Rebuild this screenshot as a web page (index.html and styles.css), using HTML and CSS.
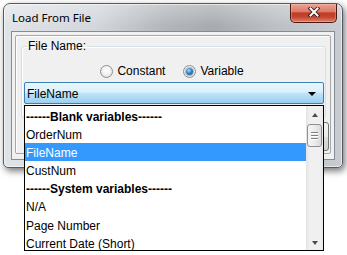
FILE: index.html
```html
<!DOCTYPE html>
<html>
<head>
<meta charset="utf-8">
<link rel="stylesheet" href="styles.css">
</head>
<body>
<div class="window">
  <div class="titlebar">
    <div class="title">Load From File</div>
    <div class="close">
      <svg width="12" height="10" viewBox="0 0 12 10">
        <path d="M2.5 1.5 L9.5 8.5 M9.5 1.5 L2.5 8.5" stroke="#3a1712" stroke-width="3.8" stroke-linecap="square" fill="none"/>
        <path d="M2.5 1.5 L9.5 8.5 M9.5 1.5 L2.5 8.5" stroke="#ffffff" stroke-width="2" stroke-linecap="square" fill="none"/>
      </svg>
    </div>
  </div>
  <div class="client">
    <div class="panel">
      <fieldset class="group">
        <legend class="legend">File Name:</legend>
        <div class="radios">
          <label class="radio"><span class="rb"></span><span>Constant</span></label>
          <label class="radio"><span class="rb"><span class="dot"></span></span><span>Variable</span></label>
        </div>
        <div class="combo">
          <span class="combo-text">FileName</span>
          <span class="arrow"></span>
        </div>
      </fieldset>
      <div class="buttons">
        <div class="btn"></div>
      </div>
    </div>
  </div>
</div>

<div class="list">
  <div class="rows">
    <div class="row hdr">------Blank variables------</div>
    <div class="row">OrderNum</div>
    <div class="row sel">FileName</div>
    <div class="row">CustNum</div>
    <div class="row hdr">------System variables------</div>
    <div class="row">N/A</div>
    <div class="row">Page Number</div>
    <div class="row">Current Date (Short)</div>
  </div>
  <div class="sb">
    <div class="sb-btn"><span class="up"></span></div>
    <div class="thumb"><span class="grip"></span><span class="grip"></span><span class="grip"></span></div>
    <div class="sb-track"></div>
    <div class="sb-btn"><span class="down"></span></div>
  </div>
</div>
</body>
</html>
```
FILE: styles.css
```css
* { box-sizing: border-box; }

body {
  margin: 0;
  width: 347px;
  height: 255px;
  overflow: hidden;
  position: relative;
  background: #ffffff;
  font-family: "Liberation Sans", Arial, sans-serif;
  font-size: 12px;
  color: #000;
}

.window {
  margin: 3px 0 0 3px;
  width: 340px;
  height: 165px;
  border: 1px solid #555b62;
  border-radius: 7px 7px 5px 5px;
  background:
    linear-gradient(180deg, rgba(255,255,255,0.3) 0px, rgba(255,255,255,0) 22px),
    linear-gradient(90deg, #e0e4e8 0%, #d2d6db 28%, #b2b6ba 48%, #a7abaf 62%, #bcc0c4 80%, #c8ccd0 100%);
  box-shadow: inset 0 0 0 1px rgba(255,255,255,0.55), 2px 3px 7px rgba(0, 0, 0, 0.55);
  display: flex;
  flex-direction: column;
  padding: 0 7px 7px;
}

.titlebar {
  height: 27px;
  display: flex;
  align-items: flex-start;
  justify-content: space-between;
}

.title {
  padding: 5px 0 0 1px;
  font-family: "Noto Sans", "Liberation Sans", sans-serif;
  font-size: 11.5px;
  line-height: 17px;
  color: #000;
}

.close {
  width: 47px;
  height: 19px;
  margin-right: -2px;
  border: 1px solid #4a1a12;
  border-top: none;
  border-radius: 0 0 5px 5px;
  background: linear-gradient(180deg, #e9a393 0%, #db7b69 42%, #c13c26 50%, #c4442e 72%, #e0866c 100%);
  box-shadow: inset 0 0 0 1px rgba(255,200,190,0.35);
  display: flex;
  align-items: center;
  justify-content: center;
  padding-bottom: 2px;
}

.client {
  flex: 1;
  border: 1px solid #868c93;
  background: #f0f0f0;
  padding: 3px 3px 5px;
}

.panel {
  height: 100%;
  border: 1px solid #a7a7a7;
  border-radius: 2px;
  box-shadow: inset 1px 1px 0 #ffffff;
  padding: 3px 0 0 5px;
  display: flex;
  flex-direction: column;
}

.group {
  margin: 0 4px 0 0;
  padding: 0 0 0 2px;
  height: 79px;
  border: 1px solid #d5dfe5;
  border-radius: 3px;
  box-shadow: inset 1px 1px 0 #ffffff;
}

.legend {
  margin-left: 3px;
  padding: 0 1px;
  font-size: 12px;
  line-height: 14px;
}

.radios {
  margin-top: 10px;
  height: 16px;
  display: flex;
  justify-content: center;
  gap: 18px;
  padding-right: 5px;
}

.radio {
  display: flex;
  align-items: center;
  gap: 4px;
  line-height: 16px;
}

.rb {
  width: 13px;
  height: 13px;
  border-radius: 50%;
  border: 1px solid #8e8f8f;
  background: radial-gradient(circle at 50% 40%, #ffffff 0%, #f3f3f3 45%, #d2d2d2 100%);
  display: flex;
  align-items: center;
  justify-content: center;
}

.dot {
  width: 7px;
  height: 7px;
  border-radius: 50%;
  background: radial-gradient(circle at 40% 35%, #a9def8 0%, #3a8fd0 40%, #0e3a66 100%);
  box-shadow: 0 0 0 1px rgba(40, 80, 120, 0.35);
}

.combo {
  margin-top: 3px;
  width: 300px;
  height: 22px;
  border: 1px solid #3c7fb1;
  border-radius: 2px;
  background: linear-gradient(180deg, #eaf6fd 0%, #d9f0fc 45%, #bce4fb 52%, #9acff1 100%);
  display: flex;
  align-items: center;
  justify-content: space-between;
  padding: 0 7px 0 2px;
}

.combo-text {
  font-size: 12px;
  line-height: 16px;
  padding-top: 1px;
}

.arrow {
  width: 0;
  height: 0;
  border-left: 4px solid transparent;
  border-right: 4px solid transparent;
  border-top: 4px solid #000;
  margin-top: 1px;
}

.buttons {
  margin-top: 4px;
  display: flex;
  justify-content: flex-end;
  padding-right: 1px;
}

.btn {
  width: 70px;
  height: 29px;
  border: 1px solid #707070;
  border-radius: 3px;
  background: linear-gradient(180deg, #f2f2f2 0%, #ebebeb 50%, #dddddd 51%, #cfcfcf 100%);
}

/* dropdown popup lying over the dialog */
.list {
  position: absolute;
  left: 24px;
  top: 105px;
  width: 300px;
  height: 146px;
  border: 1px solid #000;
  background: #fff;
  display: flex;
}

.rows {
  flex: 1;
  padding-top: 0.5px;
}

.row {
  height: 18.2px;
  line-height: 20px;
  padding-left: 1px;
  white-space: nowrap;
  font-size: 12px;
  overflow: hidden;
}

.hdr {
  font-weight: bold;
}

.sel {
  background: #3399ff;
  color: #fff;
}

.sb {
  width: 17px;
  background: linear-gradient(90deg, #e3e3e3 0%, #f0f0f0 20%, #f0f0f0 80%, #e8e8e8 100%);
  display: flex;
  flex-direction: column;
}

.sb-btn {
  height: 17px;
  display: flex;
  align-items: center;
  justify-content: center;
}

.up {
  width: 0;
  height: 0;
  border-left: 3.5px solid transparent;
  border-right: 3.5px solid transparent;
  border-bottom: 4px solid #4d4d4d;
}

.down {
  width: 0;
  height: 0;
  border-left: 3.5px solid transparent;
  border-right: 3.5px solid transparent;
  border-top: 4px solid #4d4d4d;
  margin-top: 2px;
}

.thumb {
  margin: 1px 1px 0;
  height: 23px;
  border: 1px solid #8f8f8f;
  border-radius: 3px;
  background: linear-gradient(90deg, #f6f6f6 0%, #ececec 50%, #dadada 100%);
  display: flex;
  flex-direction: column;
  align-items: center;
  justify-content: center;
  gap: 1px;
}

.grip {
  width: 7px;
  height: 2px;
  border-top: 1px solid #7e7e7e;
  border-bottom: 1px solid #ffffff;
}

.sb-track {
  flex: 1;
}
```
